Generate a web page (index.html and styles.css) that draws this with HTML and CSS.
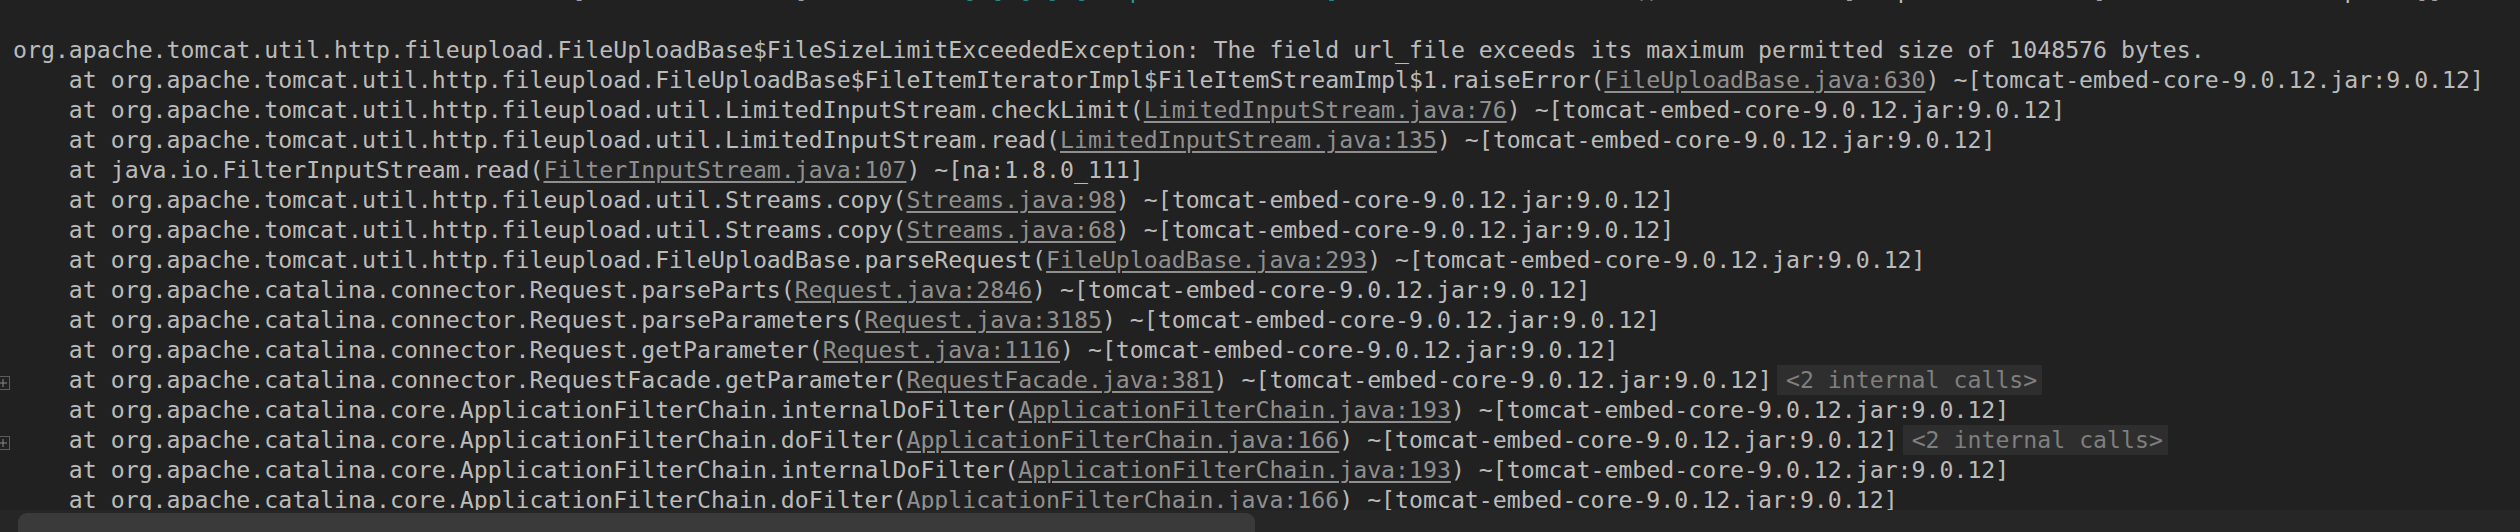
FILE: index.html
```html
<!DOCTYPE html>
<html>
<head>
<meta charset="utf-8">
<link rel="stylesheet" href="styles.css">
</head>
<body>
<div class="editor">
  <div class="lines">
    <div class="row"><span class="gutter"></span><span class="code">2018-10-17 15:20:33.912 <span class="red">ERROR</span> <span class="mag">22756</span> --- [nio-8080-exec-1] <span class="cyan">o.a.c.c.C.[.[.[/].[dispatcherServlet]</span>    : Servlet.service() for servlet [dispatcherServlet] in context with path [] threw exception [Request processing failed; nested exception is org.spr</span></div>
    <div class="row"><span class="gutter"></span><span class="code"> </span></div>
    <div class="row"><span class="gutter"></span><span class="code">org.apache.tomcat.util.http.fileupload.FileUploadBase$FileSizeLimitExceededException: The field url_file exceeds its maximum permitted size of 1048576 bytes.</span></div>
    <div class="row"><span class="gutter"></span><span class="code">    at org.apache.tomcat.util.http.fileupload.FileUploadBase$FileItemIteratorImpl$FileItemStreamImpl$1.raiseError(<span class="link">FileUploadBase.java:630</span>) ~[tomcat-embed-core-9.0.12.jar:9.0.12]</span></div>
    <div class="row"><span class="gutter"></span><span class="code">    at org.apache.tomcat.util.http.fileupload.util.LimitedInputStream.checkLimit(<span class="link">LimitedInputStream.java:76</span>) ~[tomcat-embed-core-9.0.12.jar:9.0.12]</span></div>
    <div class="row"><span class="gutter"></span><span class="code">    at org.apache.tomcat.util.http.fileupload.util.LimitedInputStream.read(<span class="link">LimitedInputStream.java:135</span>) ~[tomcat-embed-core-9.0.12.jar:9.0.12]</span></div>
    <div class="row"><span class="gutter"></span><span class="code">    at java.io.FilterInputStream.read(<span class="link">FilterInputStream.java:107</span>) ~[na:1.8.0_111]</span></div>
    <div class="row"><span class="gutter"></span><span class="code">    at org.apache.tomcat.util.http.fileupload.util.Streams.copy(<span class="link">Streams.java:98</span>) ~[tomcat-embed-core-9.0.12.jar:9.0.12]</span></div>
    <div class="row"><span class="gutter"></span><span class="code">    at org.apache.tomcat.util.http.fileupload.util.Streams.copy(<span class="link">Streams.java:68</span>) ~[tomcat-embed-core-9.0.12.jar:9.0.12]</span></div>
    <div class="row"><span class="gutter"></span><span class="code">    at org.apache.tomcat.util.http.fileupload.FileUploadBase.parseRequest(<span class="link">FileUploadBase.java:293</span>) ~[tomcat-embed-core-9.0.12.jar:9.0.12]</span></div>
    <div class="row"><span class="gutter"></span><span class="code">    at org.apache.catalina.connector.Request.parseParts(<span class="link">Request.java:2846</span>) ~[tomcat-embed-core-9.0.12.jar:9.0.12]</span></div>
    <div class="row"><span class="gutter"></span><span class="code">    at org.apache.catalina.connector.Request.parseParameters(<span class="link">Request.java:3185</span>) ~[tomcat-embed-core-9.0.12.jar:9.0.12]</span></div>
    <div class="row"><span class="gutter"></span><span class="code">    at org.apache.catalina.connector.Request.getParameter(<span class="link">Request.java:1116</span>) ~[tomcat-embed-core-9.0.12.jar:9.0.12]</span></div>
    <div class="row"><span class="gutter"><svg class="fold" width="14" height="14" viewBox="0 0 14 14"><rect x="0.5" y="0.5" width="13" height="13" fill="none" stroke="#5c5c5c"/><path d="M3 7h8M7 3v8" stroke="#8a8a8a" stroke-width="1"/></svg></span><span class="code">    at org.apache.catalina.connector.RequestFacade.getParameter(<span class="link">RequestFacade.java:381</span>) ~[tomcat-embed-core-9.0.12.jar:9.0.12]<span class="inlay">&lt;2 internal calls&gt;</span></span></div>
    <div class="row"><span class="gutter"></span><span class="code">    at org.apache.catalina.core.ApplicationFilterChain.internalDoFilter(<span class="link">ApplicationFilterChain.java:193</span>) ~[tomcat-embed-core-9.0.12.jar:9.0.12]</span></div>
    <div class="row"><span class="gutter"><svg class="fold" width="14" height="14" viewBox="0 0 14 14"><rect x="0.5" y="0.5" width="13" height="13" fill="none" stroke="#5c5c5c"/><path d="M3 7h8M7 3v8" stroke="#8a8a8a" stroke-width="1"/></svg></span><span class="code">    at org.apache.catalina.core.ApplicationFilterChain.doFilter(<span class="link">ApplicationFilterChain.java:166</span>) ~[tomcat-embed-core-9.0.12.jar:9.0.12]<span class="inlay">&lt;2 internal calls&gt;</span></span></div>
    <div class="row"><span class="gutter"></span><span class="code">    at org.apache.catalina.core.ApplicationFilterChain.internalDoFilter(<span class="link">ApplicationFilterChain.java:193</span>) ~[tomcat-embed-core-9.0.12.jar:9.0.12]</span></div>
    <div class="row"><span class="gutter"></span><span class="code">    at org.apache.catalina.core.ApplicationFilterChain.doFilter(<span class="link">ApplicationFilterChain.java:166</span>) ~[tomcat-embed-core-9.0.12.jar:9.0.12]</span></div>
  </div>
</div>
<div class="hscroll"><div class="thumb"></div></div>
</body>
</html>
```

FILE: styles.css
```css
html, body {
  margin: 0;
  padding: 0;
  background: #212121;
}
body {
  width: 2520px;
  height: 532px;
  overflow: hidden;
}
.editor {
  height: 510px;
  overflow: hidden;
}
.lines {
  margin-top: -25px;
  font-family: "DejaVu Sans Mono", "Liberation Mono", monospace;
  font-size: 23.2px;
  line-height: 30px;
  color: #bbbbbb;
}
.row {
  display: flex;
  height: 30px;
  white-space: pre;
}
.gutter {
  flex: 0 0 13px;
  width: 13px;
  overflow: hidden;
  display: flex;
  align-items: flex-start;
}
.fold {
  flex: 0 0 14px;
  margin-left: -4px;
  margin-top: 11px;
}
.code {
  white-space: pre;
}
.link {
  color: #8f8f8f;
  text-decoration: underline;
  text-decoration-color: #8f8f8f;
  text-underline-offset: 3px;
  text-decoration-thickness: 1.5px;
}
.red { color: #ff6b68; }
.mag { color: #ae8abe; }
.cyan { color: #299999; }
.inlay {
  display: inline-block;
  margin-left: 5px;
  padding: 0 5px 0 9px;
  background: #2e2e2e;
  color: #7f7f7f;
  height: 30px;
  vertical-align: top;
}
.hscroll {
  height: 22px;
  background: #262626;
  padding-top: 3px;
  box-sizing: border-box;
}
.thumb {
  margin-left: 18px;
  width: 1237px;
  height: 19px;
  border-radius: 9px 9px 0 0;
  background: #3a3a3a;
}
```
